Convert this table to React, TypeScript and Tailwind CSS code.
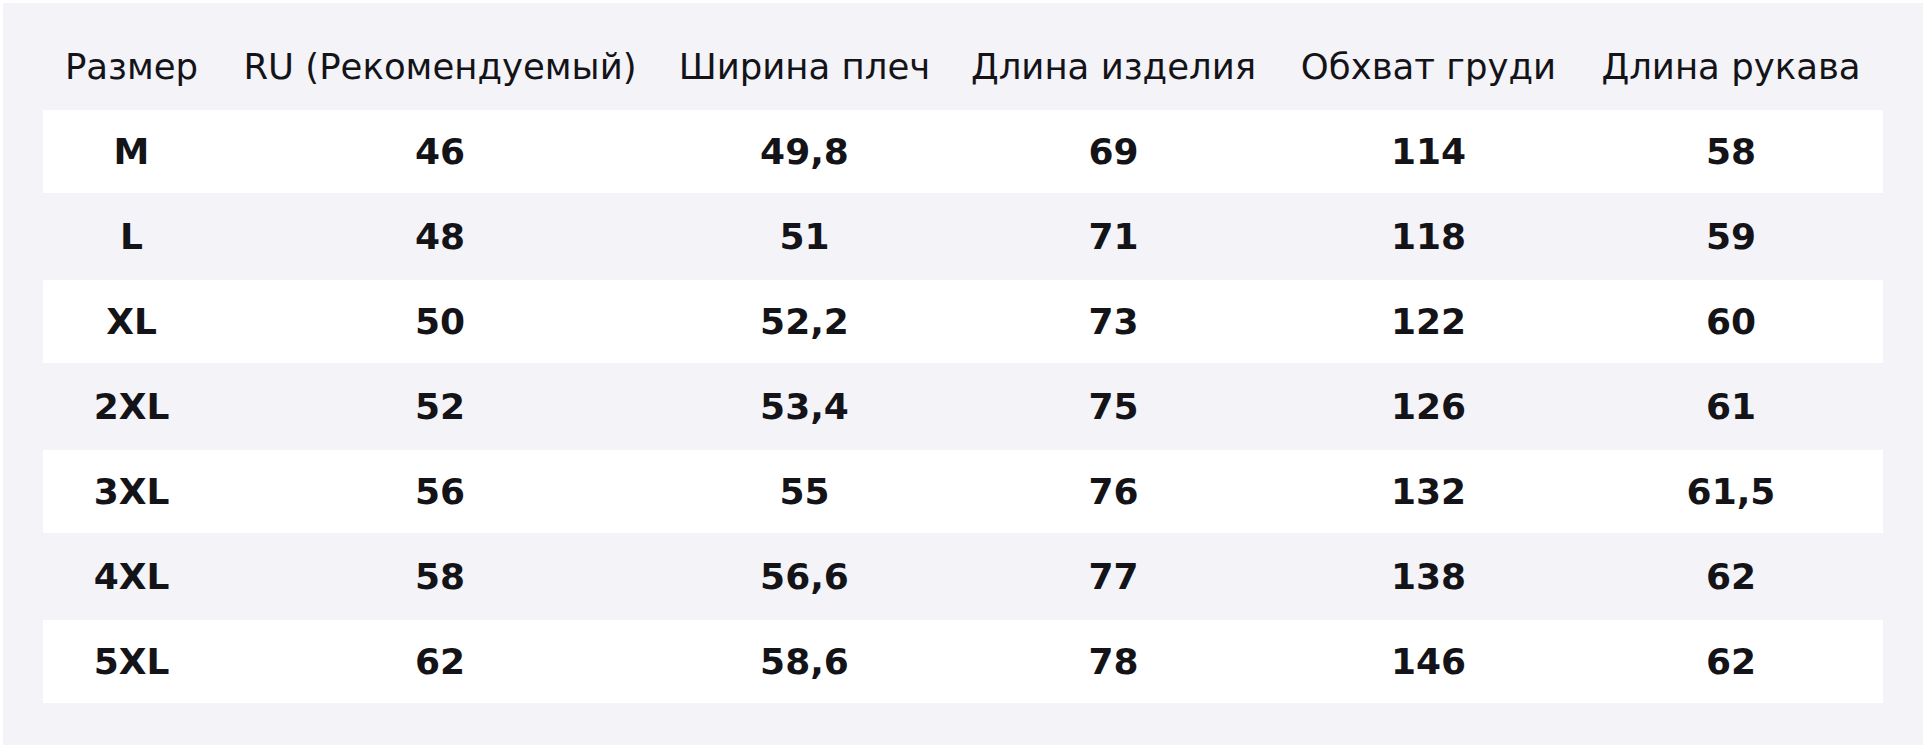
import React from "react";

const headers = [
  "Размер",
  "RU (Рекомендуемый)",
  "Ширина плеч",
  "Длина изделия",
  "Обхват груди",
  "Длина рукава",
];

const rows: string[][] = [
  ["M", "46", "49,8", "69", "114", "58"],
  ["L", "48", "51", "71", "118", "59"],
  ["XL", "50", "52,2", "73", "122", "60"],
  ["2XL", "52", "53,4", "75", "126", "61"],
  ["3XL", "56", "55", "76", "132", "61,5"],
  ["4XL", "58", "56,6", "77", "138", "62"],
  ["5XL", "62", "58,6", "78", "146", "62"],
];

const gridCols = "grid grid-cols-[177px_440px_289px_329px_301px_304px] items-center h-[83px]";

export default function App() {
  return (
    <div
      className="w-full bg-white p-[3px]"
      style={{ fontFamily: '"DejaVu Sans", "Noto Sans", sans-serif' }}
    >
      <div className="bg-[#f3f3f8] pt-[22px] pb-[42px] px-[40px] text-[#141418]">
        <div className="flex flex-col gap-[2px]">
          <div className={gridCols}>
            {headers.map((h) => (
              <div key={h} className="text-center text-[35.5px] font-normal whitespace-nowrap">
                {h}
              </div>
            ))}
          </div>
          {rows.map((r, i) => (
            <div key={r[0]} className={`${gridCols} ${i % 2 === 0 ? "bg-white" : ""}`}>
              {r.map((c, j) => (
                <div key={j} className="text-center text-[36px] font-bold whitespace-nowrap">
                  {c}
                </div>
              ))}
            </div>
          ))}
        </div>
      </div>
    </div>
  );
}
